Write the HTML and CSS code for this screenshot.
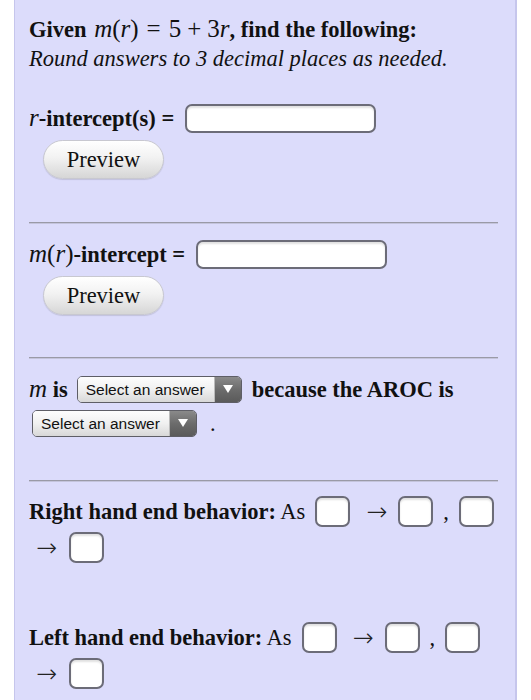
FILE: index.html
```html
<!DOCTYPE html>
<html>
<head>
<meta charset="utf-8">
<link rel="stylesheet" href="styles.css">
</head>
<body>
<div class="panel">
  <div class="intro">
    <p class="line"><b>Given</b> <span class="math"><i>m</i>(<i>r</i>)<span class="rel">=</span>5<span class="bin">+</span>3<i>r</i></span><b>, find the following:</b></p>
    <p class="line"><em>Round answers to 3 decimal places as needed.</em></p>
  </div>

  <div class="row first-row">
    <span class="label"><span class="math"><i>r</i></span><b>-intercept(s) =</b></span>
    <span class="input wide"></span>
  </div>
  <button class="preview">Preview</button>

  <hr class="rule">

  <div class="row second-row">
    <span class="label"><span class="math"><i>m</i>(<i>r</i>)</span><b>-intercept =</b></span>
    <span class="input wide"></span>
  </div>
  <button class="preview">Preview</button>

  <hr class="rule">

  <div class="row choice-row">
    <span class="label"><span class="math"><i>m</i></span><b> is</b></span>
    <span class="select"><span class="select-text">Select an answer</span><span class="select-arrow"><span class="tri"></span></span></span>
    <b class="label">because the AROC is</b>
  </div>
  <div class="row choice-row2">
    <span class="select"><span class="select-text">Select an answer</span><span class="select-arrow"><span class="tri"></span></span></span>
    <span class="dot">.</span>
  </div>

  <hr class="rule rule3">

  <div class="row end-row">
    <span class="label"><b>Right hand end behavior:</b> As</span>
    <span class="input box"></span>
    <span class="arrow">→</span>
    <span class="input box"></span>
    <span class="comma">,</span>
    <span class="input box"></span>
  </div>
  <div class="row end-row2">
    <span class="arrow lead">→</span>
    <span class="input box"></span>
  </div>

  <div class="row end-row left-row">
    <span class="label"><b>Left hand end behavior:</b> As</span>
    <span class="input box"></span>
    <span class="arrow">→</span>
    <span class="input box"></span>
    <span class="comma">,</span>
    <span class="input box"></span>
  </div>
  <div class="row end-row2">
    <span class="arrow lead">→</span>
    <span class="input box"></span>
  </div>
</div>
</body>
</html>
```

FILE: styles.css
```css
html, body {
  margin: 0;
  padding: 0;
  background: #ffffff;
}

body {
  font-family: "Liberation Serif", "Times New Roman", serif;
  font-size: 22.5px;
  color: #111111;
}

.panel {
  margin-left: 14px;
  width: 469px;
  min-height: 700px;
  box-sizing: content-box;
  padding: 15px 17px 0 14px;
  background: #dcdcfb;
  border-left: 1px solid #c6c6ec;
  border-right: 2px solid #c6c6ec;
}

.intro .line {
  margin: 0;
  line-height: 29px;
  white-space: nowrap;
}

.math {
  font-weight: normal;
  font-size: 25px;
  line-height: 20px;
}

.math i {
  font-style: italic;
  font-weight: normal;
}

.intro .math {
  margin-left: 2px;
}

.rel {
  margin: 0 8px;
}

.bin {
  margin: 0 6px;
}

.row {
  display: flex;
  align-items: center;
  white-space: nowrap;
  line-height: 29px;
}

.label b,
b.label {
  font-weight: bold;
}

.first-row {
  margin-top: 31px;
  height: 29px;
}

.first-row .input {
  margin-left: 11px;
}

.second-row {
  margin-top: 16px;
  height: 29px;
}

.second-row .input {
  margin-left: 11px;
}

.input {
  display: inline-block;
  box-sizing: border-box;
  background: #ffffff;
  border: 2px solid #6c6c78;
  border-radius: 7px;
  box-shadow: inset 0 2px 2px rgba(0, 0, 0, 0.12);
}

.wide {
  width: 191px;
  height: 29px;
}

.box {
  width: 35px;
  height: 31px;
}

.preview {
  display: block;
  margin: 7px 0 0 14px;
  width: 121px;
  height: 39px;
  padding: 0;
  border: 1px solid #c8c8d0;
  border-radius: 20px;
  background: linear-gradient(#ffffff 0%, #f2f2f2 45%, #d6d6d6 100%);
  box-shadow: 0 1px 1px rgba(0, 0, 0, 0.12);
  font-family: "Liberation Serif", "Times New Roman", serif;
  font-size: 22.5px;
  color: #111111;
}

.rule {
  margin: 43px 0 0 0;
  height: 0;
  border: 0;
  border-top: 1px solid #9a9aa6;
  border-bottom: 1px solid #c4c4dc;
}

.second-row + .preview + .rule {
  margin-top: 42px;
}

.rule3 {
  margin-top: 44px;
}

.choice-row {
  margin-top: 17px;
  height: 26px;
}

.choice-row .select {
  margin: 0 10px 0 9px;
}

.choice-row2 {
  margin-top: 8px;
  height: 26px;
}

.choice-row2 .select {
  margin-left: 3px;
}

.select {
  display: inline-flex;
  box-sizing: border-box;
  width: 165px;
  height: 27px;
  border: 1px solid #5e5e66;
  border-radius: 5px;
  overflow: hidden;
  font-family: "Liberation Sans", Arial, sans-serif;
  font-size: 15.5px;
  line-height: 25px;
  color: #111111;
}

.select-text {
  flex: 1;
  padding-left: 8px;
  background: linear-gradient(#fdfdfd 0%, #f0f0f0 50%, #d8d8d8 100%);
  border-right: 1px solid #bbbbbb;
}

.select-arrow {
  width: 26px;
  display: flex;
  align-items: center;
  justify-content: center;
  background: linear-gradient(#8a8a8a 0%, #6c6c6c 50%, #5a5a5a 100%);
}

.tri {
  width: 0;
  height: 0;
  border-left: 5px solid transparent;
  border-right: 5px solid transparent;
  border-top: 8px solid #ffffff;
}

.dot {
  margin-left: 13px;
}

.end-row {
  margin-top: 14px;
  height: 31px;
}

.end-row .label {
  margin-right: 10px;
}

.end-row2 {
  margin-top: 5px;
  height: 31px;
}

.left-row {
  margin-top: 59px;
}

.arrow {
  font-family: "DejaVu Sans", sans-serif;
  font-size: 25px;
  font-weight: 200;
  margin: 0 11px 0 16px;
  color: #222222;
}

.arrow.lead {
  margin: 0 12px 0 7px;
}

.comma {
  margin: 0 10px 0 10px;
}
```
